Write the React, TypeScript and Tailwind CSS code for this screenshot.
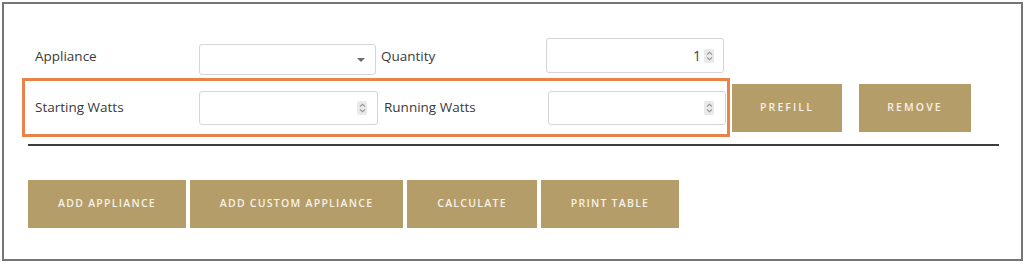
import React from "react";

const Spinner = () => (
  <span className="flex h-[14px] w-[10px] items-center justify-center rounded-[2px] bg-[#e9e9e9]">
    <svg width="7" height="10" viewBox="0 0 7 10" fill="none" stroke="#8f8f8f" strokeWidth="1.1">
      <path d="M1 3.6 L3.5 1.2 L6 3.6" />
      <path d="M1 6.4 L3.5 8.8 L6 6.4" />
    </svg>
  </span>
);

const Caret = () => (
  <svg width="8" height="4" viewBox="0 0 8 4">
    <path d="M0 0 H8 L4 4 Z" fill="#6b6b6b" />
  </svg>
);

const labelCls = "text-[13.5px] text-[#3a3a3a] leading-none";
const fieldCls = "flex items-center justify-end border border-[#d5d5d5] rounded-[3px] bg-white";

const GoldButton = ({ label, w, tight }: { label: string; w: string; tight?: boolean }) => (
  <button
    type="button"
    className={`${w} h-[48px] bg-[#b49d68] text-[#f6f1e6] text-[10.5px] font-semibold uppercase ${
      tight ? "tracking-[0.12em]" : "tracking-[0.2em]"
    }`}
    style={{ fontFamily: "'Open Sans', 'Liberation Sans', sans-serif" }}
  >
    {label}
  </button>
);

export default function App() {
  return (
    <div className="p-[2px] bg-white" style={{ fontFamily: "'Open Sans', 'Liberation Sans', sans-serif" }}>
      <div className="w-[1021px] h-[259px] border-2 border-[#757575] pl-[18px] pt-[34px]">
        {/* appliance row */}
        <div className="flex h-[37px] items-start border-x-[3px] border-transparent pl-[10px]">
          <span className={`${labelCls} w-[164px] self-center`}>Appliance</span>
          <div className={`${fieldCls} mt-[6px] h-[31px] w-[177px] pr-[10px]`}>
            <Caret />
          </div>
          <span className={`${labelCls} ml-[5px] w-[165px] self-center`}>Quantity</span>
          <div className={`${fieldCls} h-[35px] w-[178px] gap-[3px] pr-[9px]`}>
            <span className="text-[14px] text-[#444]">1</span>
            <Spinner />
          </div>
        </div>

        {/* watts row */}
        <div className="mt-[3px] flex items-center">
          <div className="flex h-[59px] w-[708px] items-center border-[3px] border-[#e8834a] pl-[10px]">
            <span className={`${labelCls} w-[164px]`}>Starting Watts</span>
            <div className={`${fieldCls} h-[34px] w-[179px] pr-[10px]`}>
              <Spinner />
            </div>
            <span className={`${labelCls} ml-[6px] w-[164px]`}>Running Watts</span>
            <div className={`${fieldCls} h-[34px] w-[178px] pr-[11px]`}>
              <Spinner />
            </div>
          </div>
          <div className="ml-[2px] flex gap-[17px]">
            <GoldButton label="Prefill" w="w-[110px]" />
            <GoldButton label="Remove" w="w-[112px]" />
          </div>
        </div>

        <div className="ml-[6px] mt-[7px] h-[1.5px] w-[971px] bg-[#3c3c3c]" />

        <div className="ml-[6px] mt-[34px] flex gap-[4px]">
          <GoldButton label="Add Appliance" w="w-[158px]" tight />
          <GoldButton label="Add Custom Appliance" w="w-[213px]" tight />
          <GoldButton label="Calculate" w="w-[130px]" tight />
          <GoldButton label="Print Table" w="w-[138px]" tight />
        </div>
      </div>
    </div>
  );
}
